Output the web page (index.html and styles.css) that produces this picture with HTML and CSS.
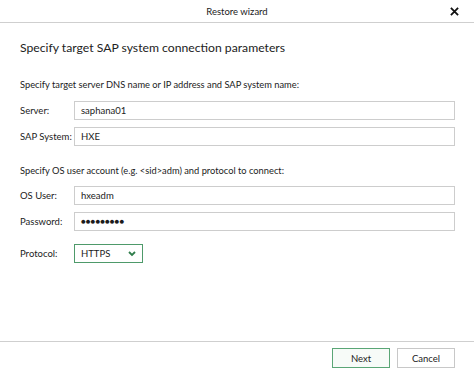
FILE: index.html
```html
<!DOCTYPE html>
<html>
  <head>
    <link rel="stylesheet" href="styles.css">
  </head>
  <body>
    <div class="window">
      <div class="titlebar">
        <span></span>
        <span class="title">Restore wizard</span>
        <span class="close">
          <svg width="9" height="9" viewBox="0 0 10 10"><path d="M1 1 L9 9 M9 1 L1 9" stroke="#111" stroke-width="2"/></svg>
        </span>
      </div>

      <div class="content">
        <p class="heading">Specify target SAP system connection parameters</p>

        <p class="intro intro-first">Specify target server DNS name or IP address and SAP system name:</p>
        <div class="field">
          <span class="label">Server:</span>
          <div class="input">saphana01</div>
        </div>
        <div class="field">
          <span class="label">SAP System:</span>
          <div class="input">HXE</div>
        </div>

        <p class="intro intro-second">Specify OS user account (e.g. &lt;sid&gt;adm) and protocol to connect:</p>
        <div class="field">
          <span class="label">OS User:</span>
          <div class="input">hxeadm</div>
        </div>
        <div class="field">
          <span class="label">Password:</span>
          <div class="input password">&#9679;&#9679;&#9679;&#9679;&#9679;&#9679;&#9679;&#9679;&#9679;</div>
        </div>
        <div class="field field-protocol">
          <span class="label">Protocol:</span>
          <div class="select">
            <span>HTTPS</span>
            <svg width="8" height="6" viewBox="0 0 8 6"><path d="M1 1 L4 4 L7 1" stroke="#2f7d4b" stroke-width="1.8" fill="none"/></svg>
          </div>
        </div>
      </div>

      <div class="footer">
        <button class="btn btn-next">Next</button>
        <button class="btn">Cancel</button>
      </div>
    </div>
  </body>
</html>
```

FILE: styles.css
```css
body{
  margin: 0;
  background-color: white;
  font-family: Lato, "Noto Sans", sans-serif;
  color: #1b1b1b;
}
.window{
  width: 474px;
  height: 374px;
  display: flex;
  flex-direction: column;
}
.titlebar{
  height: 22px;
  border-bottom: 1px solid #cfcfcf;
  display: grid;
  grid-template-columns: 1fr auto 1fr;
  align-items: center;
}
.title{
  font-size: 9.5px;
  color: #222;
}
.close{
  justify-self: end;
  margin-right: 15px;
  display: flex;
}
.content{
  flex: 1;
  padding: 0 19px 0 20px;
}
.heading{
  margin: 16px 0 0 0;
  font-size: 12.2px;
  line-height: 18px;
  color: #222;
}
.intro{
  font-size: 9.3px;
  line-height: 15px;
  margin: 0 0 9px 0;
}
.intro-first{
  margin-top: 20px;
}
.intro-second{
  margin-top: 17px;
  margin-bottom: 8px;
}
.field{
  display: flex;
  align-items: center;
  margin-bottom: 7px;
}
.label{
  width: 54px;
  font-size: 9.5px;
  white-space: nowrap;
}
.input{
  flex: 1;
  height: 17px;
  border: 1px solid #cdcdcd;
  font-size: 9.5px;
  line-height: 17px;
  padding-left: 6px;
}
.password{
  font-size: 8px;
}
.field-protocol{
  margin-top: 13px;
}
.select{
  width: 55px;
  height: 17px;
  border: 1px solid #4e9a6a;
  display: flex;
  align-items: center;
  justify-content: space-between;
  padding: 0 6px 0 6px;
  font-size: 9.5px;
}
.footer{
  border-top: 1px solid #cfcfcf;
  height: 33px;
  display: flex;
  justify-content: flex-end;
  align-items: flex-start;
  padding: 6px 19px 0 0;
  gap: 7px;
  box-sizing: border-box;
}
.btn{
  width: 58px;
  height: 20px;
  background-color: white;
  border: 1px solid #c8c8c8;
  font-family: Lato, "Noto Sans", sans-serif;
  font-size: 9.5px;
  color: #222;
  padding: 0;
}
.btn-next{
  border-color: #5aa676;
  background-color: #f7fbf8;
}
```
